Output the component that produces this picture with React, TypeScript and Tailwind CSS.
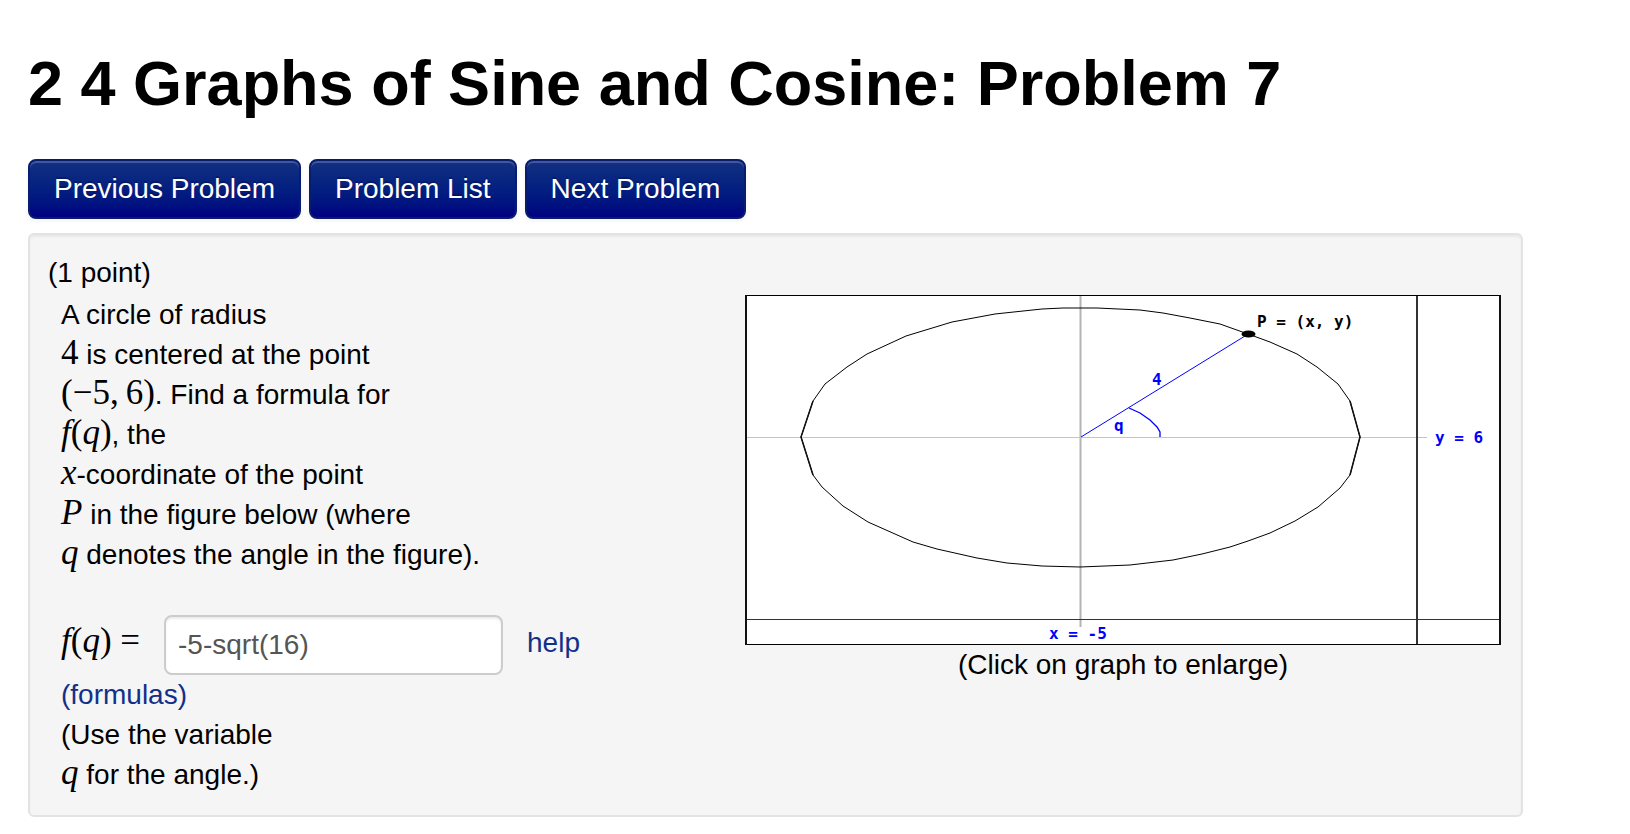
import { useState } from "react"
import type { ReactNode } from "react"

const Math = ({ children }: { children: ReactNode }) => (
  <span className="font-['Liberation_Serif',serif] text-[35px] leading-0">{children}</span>
)

const NavButton = ({ children }: { children: ReactNode }) => (
  <button
    type="button"
    className="h-[60px] rounded-lg border-2 border-[#0a1c70] bg-linear-to-b from-[#133080] to-[#000080] px-6 text-[28px] leading-10 text-white shadow-[inset_0_2px_0_rgba(255,255,255,0.2),0_2px_4px_rgba(0,0,0,0.05)] text-shadow-[0_-2px_0_rgba(0,0,0,0.25)]"
  >
    {children}
  </button>
)

// Points of the circle, stretched horizontally by the plot's scale
const circlePoints =
  "56,142 68,106 80,89 102,72 122,59 161,41 207,27 250,19 297,14 318,13 352,13 395,15 418,18 445,23 475,29 503,39 " +
  "525,47 552,59 572,72 593,89 605,106 615,142 605,180 595,193 573,212 550,226 525,238 503,246 485,252 457,259 " +
  "428,265 385,270 335,272 297,271 262,268 232,263 192,254 168,247 123,227 98,211 77,192 68,180"

const Graph = () => (
  <svg
    viewBox="0 0 756 350"
    className="block h-auto w-full bg-white font-['DejaVu_Sans_Mono',monospace] text-[16px] font-bold"
  >
    {/* Center lines */}
    <path d="M335.5 0V332" stroke="#b4b4b4" strokeWidth="2" />
    <path d="M0 142.5H682" stroke="#c4c4c4" strokeWidth="1" />

    {/* Axes and frame */}
    <path d="M672 0V350" stroke="#333" strokeWidth="2" />
    <path d="M0 324.5H756" stroke="#333" strokeWidth="1" />
    <path d="M0 .5H756M0 349.5H756" stroke="#000" strokeWidth="1" />
    <path d="M1 0V350M755 0V350" stroke="#111" strokeWidth="2" />

    <polygon points={circlePoints} fill="none" stroke="#000" strokeWidth="1" />
    <path d="M68 106L56 142L68 180M605 106L615 142L605 180" fill="none" stroke="#111" strokeWidth="1.5" />

    {/* Radius and angle */}
    <path d="M336 142L500 41" stroke="#00f" strokeWidth="1" />
    <path d="M384 113L395 118L405 125L412 132L415 137V142" fill="none" stroke="#00f" strokeWidth="1.3" />
    <ellipse cx="503.5" cy="39" rx="7" ry="3.6" />

    <text x="512" y="32">P = (x, y)</text>
    <g fill="#00f">
      <text x="407" y="90">4</text>
      <text x="369" y="136">q</text>
      <text x="690" y="148">y = 6</text>
      <text x="304" y="344">x = -5</text>
    </g>
  </svg>
)

const App = () => {
  const [answer, setAnswer] = useState("-5-sqrt(16)")

  return (
    <main className="min-h-screen bg-white pt-[47px] pr-[107px] pb-4 pl-7 font-['Liberation_Sans',Arial,sans-serif] text-[28px] leading-10 text-black">
      <h1 className="text-[63px] leading-[72px] font-bold">2 4 Graphs of Sine and Cosine: Problem 7</h1>

      {/* Problem navigation */}
      <nav className="mt-10 flex flex-wrap gap-2">
        <NavButton>Previous Problem</NavButton>
        <NavButton>Problem List</NavButton>
        <NavButton>Next Problem</NavButton>
      </nav>

      {/* Problem body */}
      <section className="mt-[14px] rounded-md border-2 border-[#e3e3e3] bg-[#f5f5f5] pt-[18px] pr-5 pb-5 pl-[18px] shadow-[inset_0_2px_2px_rgba(0,0,0,0.05)]">
        <p>(1 point)</p>
        <div className="mt-0.5 grid grid-cols-[minmax(0,1fr)_minmax(0,756px)]">
          <div className="pl-[13px]">
            <p>
              A circle of radius
              <br />
              <Math>4</Math> is centered at the point
              <br />
              <Math>(−5,&thinsp;6)</Math>. Find a formula for
              <br />
              <Math>
                <i>f</i>(<i>q</i>)
              </Math>
              , the
              <br />
              <Math>
                <i>x</i>
              </Math>
              -coordinate of the point
              <br />
              <Math>
                <i>P</i>
              </Math>{" "}
              in the figure below (where
              <br />
              <Math>
                <i>q</i>
              </Math>{" "}
              denotes the angle in the figure).
            </p>

            <div className="mt-10">
              <label htmlFor="answer">
                <Math>
                  <i>f</i>(<i>q</i>) =
                </Math>
              </label>
              <input
                id="answer"
                type="text"
                value={answer}
                onChange={(e) => setAnswer(e.target.value)}
                className="mr-6 ml-6 h-[60px] w-[339px] rounded-lg border-2 border-[#ccc] bg-white px-3 align-middle text-[#555] shadow-[inset_0_2px_2px_rgba(0,0,0,0.075)]"
              />
              <a href="#formulas" className="text-[#133088]">
                help
                <br />
                (formulas)
              </a>
              <p>
                (Use the variable
                <br />
                <Math>
                  <i>q</i>
                </Math>{" "}
                for the angle.)
              </p>
            </div>
          </div>

          <figure className="text-center">
            <a href="#graph" aria-label="Enlarge graph">
              <Graph />
            </a>
            <figcaption>(Click on graph to enlarge)</figcaption>
          </figure>
        </div>
      </section>
    </main>
  )
}

export default App
